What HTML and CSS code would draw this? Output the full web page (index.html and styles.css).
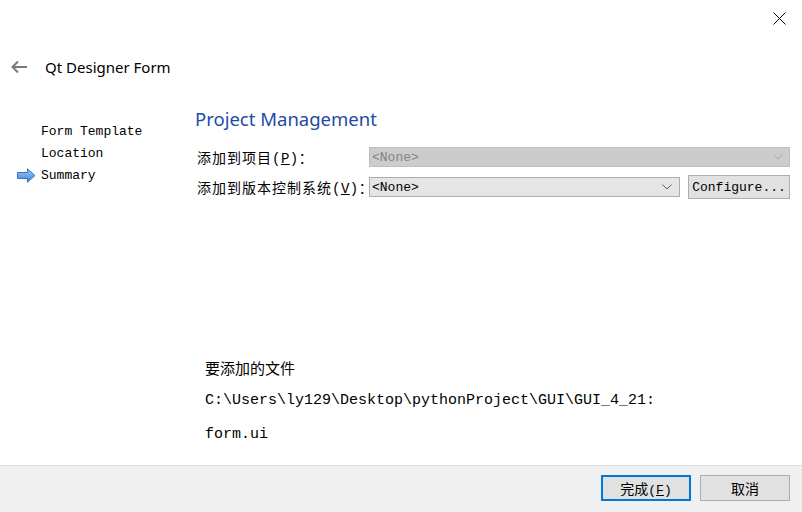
FILE: index.html
```html
<!DOCTYPE html>
<html lang="zh">
<head>
<meta charset="utf-8">
<title>Qt Designer Form</title>
<link rel="stylesheet" href="styles.css">
</head>
<body>
<div class="dialog">
  <div class="titlebar">
    <button class="close" aria-label="Close">
      <svg width="13" height="13" viewBox="0 0 13 13"><path d="M0.5 0.5 L12.5 12.5 M12.5 0.5 L0.5 12.5" stroke="#000" stroke-width="1" fill="none"/></svg>
    </button>
  </div>
  <div class="header">
    <svg class="back" width="18" height="14" viewBox="0 0 18 14"><path d="M17 7 H3 M8 1.5 L2.5 7 L8 12.5" stroke="#7a7a7a" stroke-width="2" fill="none"/></svg>
    <span class="title">Qt Designer Form</span>
  </div>
  <div class="main">
    <ul class="nav">
      <li class="nav-item">Form Template</li>
      <li class="nav-item">Location</li>
      <li class="nav-item current">
        <svg class="cur-arrow" width="19" height="15" viewBox="0 0 19 15">
          <defs><linearGradient id="g" x1="0" y1="0" x2="0" y2="1"><stop offset="0" stop-color="#9cc8f5"/><stop offset="1" stop-color="#3f86d9"/></linearGradient></defs>
          <path d="M0.5 4.5 H10.5 V0.8 L18 7.5 L10.5 14.2 V10.5 H0.5 Z" fill="url(#g)" stroke="#3a74c0" stroke-width="1"/>
        </svg>Summary</li>
    </ul>
    <div class="content">
      <h1 class="page-title">Project Management</h1>
      <div class="form">
        <label class="lbl">添加到项目<span class="acc">(<u>P</u>)</span>：</label>
        <div class="combo disabled span2"><span>&lt;None&gt;</span>
          <svg width="10" height="6" viewBox="0 0 10 6"><path d="M0.5 0.5 L5 5 L9.5 0.5" stroke="#a8a8a8" fill="none"/></svg>
        </div>
        <label class="lbl">添加到版本控制系统<span class="acc">(<u>V</u>)</span>：</label>
        <div class="combo"><span>&lt;None&gt;</span>
          <svg width="10" height="6" viewBox="0 0 10 6"><path d="M0.5 0.5 L5 5 L9.5 0.5" stroke="#606060" fill="none"/></svg>
        </div>
        <button class="btn-config">Configure...</button>
      </div>
      <div class="files">
        <p class="files-title">要添加的文件</p>
        <p class="path">C:\Users\ly129\Desktop\pythonProject\GUI\GUI_4_21:</p>
        <p class="path">form.ui</p>
      </div>
    </div>
  </div>
  <div class="footer">
    <button class="btn primary">完成<span class="acc-btn">(<u>F</u>)</span></button>
    <button class="btn">取消</button>
  </div>
</div>
</body>
</html>
```

FILE: styles.css
```css
html, body {
  margin: 0;
  padding: 0;
  background: #ffffff;
}
.dialog {
  width: 802px;
  height: 512px;
  display: flex;
  flex-direction: column;
  font-family: "Noto Sans", "Noto Sans CJK SC", sans-serif;
  color: #000;
}
.titlebar {
  height: 36px;
  display: flex;
  justify-content: flex-end;
  align-items: flex-start;
}
.close {
  margin: 12px 16px 0 0;
  padding: 0;
  border: 0;
  background: transparent;
  width: 13px;
  height: 13px;
  display: block;
}
.close svg { display: block; }
.header {
  height: 62px;
  display: flex;
  align-items: center;
  padding-left: 10px;
}
.header .back { display: block; margin-right: 17px; margin-top: -1px; }
.title {
  font-size: 15px;
  color: #000;
}
.main {
  flex: 1;
  display: flex;
  padding-top: 6px;
}
.nav {
  list-style: none;
  margin: 0;
  padding: 17px 0 0 0;
  width: 195px;
  flex: none;
}
.nav-item {
  height: 22px;
  line-height: 22px;
  padding-left: 41px;
  font-family: "Liberation Mono", monospace;
  font-size: 13px;
  position: relative;
}
.cur-arrow {
  position: absolute;
  left: 17px;
  top: 3px;
}
.content {
  flex: 1;
  display: flex;
  flex-direction: column;
  padding-right: 12px;
}
.page-title {
  margin: 0;
  height: 30px;
  line-height: 30px;
  font-size: 18.5px;
  font-weight: normal;
  color: #1d4aa8;
  font-family: "Noto Sans", sans-serif;
}
.form {
  margin: 13px 0 0 2px;
  display: grid;
  grid-template-columns: 164px 1fr 102px;
  grid-template-rows: 20px 24px;
  column-gap: 8px;
  row-gap: 8px;
  align-items: center;
}
.lbl {
  display: block;
  font-family: "Noto Sans CJK SC", sans-serif;
  font-size: 14px;
  letter-spacing: 1px;
  white-space: nowrap;
  line-height: 16px;
  height: 16px;
}
.acc {
  font-family: "Liberation Mono", monospace;
  font-size: 14px;
  letter-spacing: 0.5px;
}
.combo {
  height: 20px;
  box-sizing: border-box;
  border: 1px solid #adadad;
  background: #e5e5e5;
  display: flex;
  align-items: center;
  justify-content: space-between;
  padding: 0 7px 0 2px;
  font-family: "Liberation Mono", monospace;
  font-size: 13px;
}
.combo svg { display: block; }
.combo.span2 { grid-column: 2 / 4; }
.combo.disabled {
  background: #cccccc;
  border-color: #bfbfbf;
  color: #838383;
  padding-right: 6px;
}
.btn-config {
  height: 24px;
  box-sizing: border-box;
  border: 1px solid #adadad;
  background: #e1e1e1;
  font-family: "Liberation Mono", monospace;
  font-size: 13px;
  padding: 0;
  color: #000;
}
.files {
  margin: 159px 0 0 10px;
}
.files p { margin: 0; }
.files-title {
  font-family: "Noto Sans CJK SC", sans-serif;
  font-size: 15px;
  line-height: 20px;
}
.path {
  font-family: "Liberation Mono", monospace;
  font-size: 15px;
  font-weight: normal;
  line-height: 20px;
  margin-top: 13px !important;
  color: #000;
}
.path + .path { margin-top: 14px !important; }
.footer {
  height: 47px;
  box-sizing: border-box;
  border-top: 1px solid #dfdfdf;
  background: #f0f0f0;
  display: flex;
  justify-content: flex-end;
  align-items: flex-start;
  padding: 9px 11px 0 0;
  gap: 9px;
}
.btn {
  width: 90px;
  height: 26px;
  box-sizing: border-box;
  border: 1px solid #adadad;
  background: #e1e1e1;
  font-family: "Noto Sans CJK SC", sans-serif;
  font-size: 14px;
  padding: 0;
  color: #000;
}
.btn:last-child { margin-right: 1px; }
.acc-btn {
  font-family: "Liberation Mono", monospace;
  font-size: 13px;
}
.btn.primary {
  border: 2px solid #0078d7;
}
```
